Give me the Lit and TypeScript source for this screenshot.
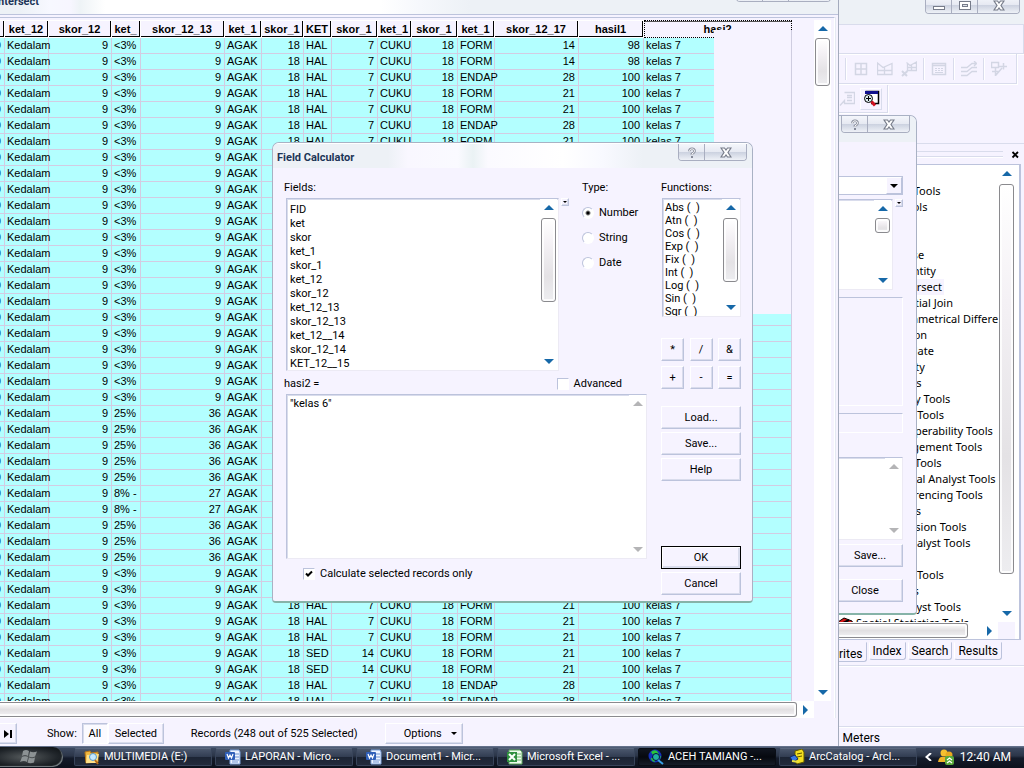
import { LitElement, html, css, svg, nothing } from "lit";
import { customElement, property, state } from "lit/decorators.js";
import { classMap } from "lit/directives/class-map.js";

/* Colours and controls shared by every window. */
const shared = css`
  :host, * { box-sizing: border-box; }
  :host {
    --face: #f6f3ff;
    --shade: #bcc3dc;
    --soft: #d9dcec;
    --title: #edf1f6;
    --ink: #000;
    font: 11px/14px Roboto, "Noto Sans", sans-serif;
    color: var(--ink);
  }
  ul { list-style: none; margin: 0; padding: 0; }
  button, select, textarea, input { font: inherit; color: inherit; margin: 0; border-radius: 0; }
  .btn {
    background: var(--face);
    border: 1px solid;
    border-color: #fff var(--shade) var(--shade) #fff;
    box-shadow: inset -1px -1px 0 var(--soft);
    height: 23px;
    padding: 0;
    text-align: center;
  }
  .btn.default { border: 1px solid #000; box-shadow: inset 1px 1px 0 #fff, inset -2px -2px 0 var(--soft); }
  .btn.tiny { width: 8px; height: 8px; display: grid; place-items: center; flex: none; }
  .sunken {
    background: #fff;
    border: 1px solid;
    border-color: var(--shade) #eceaf4 #eceaf4 var(--shade);
    box-shadow: inset 1px 1px 0 var(--soft);
  }
  .titlebar { display: flex; justify-content: space-between; align-items: flex-start; flex: none; }
  .title { font-weight: 700; color: #1d3557; }
`;

const tri = (dir: string, color = "#1668a8") => {
  const d: Record<string, string> = {
    up: "M0 5 5 0 10 5Z", down: "M0 0 10 0 5 5Z", right: "M0 0 5 5 0 10Z",
  };
  const wide = dir !== "right";
  return svg`<svg width=${wide ? 10 : 5} height=${wide ? 5 : 10} viewBox=${wide ? "0 0 10 5" : "0 0 5 10"}><path d=${d[dir]} fill=${color}/></svg>`;
};

const caret = (w = 6) => svg`<svg width=${w} height=${w / 2} viewBox="0 0 6 3"><path d="M0 0H6L3 3Z" fill="#000"/></svg>`;

/* Scroll bar: arrow, thumb, free track, arrow. */
@customElement("scroll-track")
class ScrollTrack extends LitElement {
  @property({ type: Number }) size = 0;
  @property({ type: Number }) offset = 0;
  @property({ type: Boolean, reflect: true }) horizontal = false;
  @property({ type: Boolean }) disabled = false;
  static styles = css`
    :host, * { box-sizing: border-box; }
    :host { display: flex; flex-direction: column; width: 17px; background: #fff; flex: none; }
    :host([horizontal]) { flex-direction: row; width: auto; height: 17px; }
    .end { display: grid; place-items: center; width: 17px; height: 17px; flex: none; }
    .thumb { background: linear-gradient(#fff, #f4f1f5 30%, #e4e2e5 70%, #ededf0);
      border: 1px solid #8a8a8e; border-radius: 3px; box-shadow: inset 0 0 0 2px #fffc; margin: 0 1px; flex: none; }
    :host([horizontal]) .thumb { margin: 1px 0; flex: 1; border-left: none; background: linear-gradient(#fff, #e2e0e2 50%, #f2f1f4); }
    .free { flex: 1; }
    :host([horizontal]) .free { flex: none; }
    svg { display: block; }
  `;
  render() {
    const c = this.disabled ? "#b4b4b6" : "#1668a8";
    if (this.horizontal)
      return html`<div class="thumb"></div><div class="free" style="width:${this.offset}px"></div><div class="end">${tri("right", c)}</div>`;
    return html`<div class="end">${tri("up", c)}</div>
      ${this.size ? html`<div style="height:${this.offset}px"></div><div class="thumb" style="height:${this.size}px"></div>` : nothing}
      <div class="free"></div><div class="end">${tri("down", c)}</div>`;
  }
}

/* Caption buttons joined in one glassy strip. */
@customElement("caption-buttons")
class CaptionButtons extends LitElement {
  @property() kinds = "help,close";
  static styles = css`
    :host { display: flex; height: 17px; border: 1px solid #a9aec0; border-top: none; border-radius: 0 0 4px 4px; overflow: hidden; flex: none; }
    button { border: none; border-right: 1px solid #a9aec0; padding: 0; width: 26px; display: grid; place-items: center;
      background: linear-gradient(#f4f6fb, #e6e9f2 50%, #ccd2e0 52%, #eef1f7); }
    button.close { width: 41px; border-right: none; }
    svg { display: block; }
  `;
  render() {
    const glyph: Record<string, unknown> = {
      help: svg`<path d="M3.5 4.2Q3.5 1.8 6 1.8T8.5 4.2Q8.5 5.6 6 6.8V8" fill="none" stroke="#858a99" stroke-width="2.6"/><path d="M3.5 4.2Q3.5 1.8 6 1.8T8.5 4.2Q8.5 5.6 6 6.8V8" fill="none" stroke="#fff" stroke-width="1"/><rect x="5" y="9" width="2" height="2" fill="#858a99"/>`,
      close: svg`<path d="M1 1H4.5L6 3 7.500 1H11L8 5.500 11 10H7.500L6 8 4.500 10H1L4 5.500Z" fill="#fff" stroke="#777c8a" stroke-width="1.200"/>`,
      min: svg`<rect x=".5" y="6.500" width="11" height="3" fill="#fff" stroke="#777c8a"/>`,
      max: svg`<rect x=".5" y="1.500" width="11" height="8" fill="#fff" stroke="#777c8a"/><rect x="3.500" y="4.500" width="5" height="2" fill="#dfe3ec" stroke="#777c8a"/>`,
    };
    const names: Record<string, string> = { help: "Help", close: "Close", min: "Minimize", max: "Restore" };
    return this.kinds.split(",").map(k => html`<button class=${k} aria-label=${names[k]}>
      <svg width="12" height="11" viewBox="0 0 12 11">${glyph[k]}</svg></button>`);
  }
}

interface Column { name: string; width: number; num?: boolean; }
const columns: Column[] = [
  { name: "", width: 105, num: true }, { name: "ket_12", width: 44 }, { name: "skor_12", width: 63, num: true },
  { name: "ket_", width: 29 }, { name: "skor_12_13", width: 84, num: true }, { name: "ket_1", width: 37 },
  { name: "skor_1", width: 42, num: true }, { name: "KET", width: 28 }, { name: "skor_1", width: 46, num: true },
  { name: "ket_1", width: 34 }, { name: "skor_1", width: 46, num: true }, { name: "ket_1", width: 37 },
  { name: "skor_12_17", width: 84, num: true }, { name: "hasil1", width: 65, num: true }, { name: "hasi2", width: 148 },
];

const endap = [2, 5, 40, 41];
const rows = Array.from({ length: 42 }, (_, i) => {
  const mid = i === 28 || i === 29;
  const steep = i >= 23 && i <= 32 && !mid;
  const sed = i === 38 || i === 39;
  const last = endap.includes(i) ? ["ENDAP", "28"] : ["FORM", i < 2 ? "14" : "21"];
  return ["20", "Kedalam", "9", mid ? "8% -" : steep ? "25%" : "<3%", mid ? "27" : steep ? "36" : "9",
    "AGAK", "18", sed ? "SED" : "HAL", sed ? "14" : "7", "CUKU", "18", ...last, i < 2 ? "98" : "100", "kelas 7"];
});

@customElement("attribute-window")
class AttributeWindow extends LitElement {
  static styles = [shared, css`
    :host { display: flex; flex-direction: column; background: var(--face); border-right: 1px solid #a4abbd; }
    .titlebar { height: 30px; padding: 0 7px 0 12px; border-bottom: 1px solid var(--shade);
      background: linear-gradient(90deg, var(--title) 120px, #f7f8ff 150px, #f7f6ff 170px, #eef3f6 180px, #fff 205px, #fff 480px, #f6f8fc 520px, var(--title) 570px); }
    .title { padding-top: 10px; width: 127px; text-align: right; }
    .frame { flex: 1; min-height: 0; display: flex; flex-direction: column; margin: 2px 3px 0 0; border-top: 1px solid var(--shade); border-right: 1px solid #fff; padding: 2px 3px 0 0; box-shadow: 1px 0 0 #e4e9f2; }
    .view { flex: 1; min-height: 0; display: flex; }
    .grid { flex: 1; min-width: 0; overflow: hidden; position: relative; }
    table { table-layout: fixed; width: 892px; border-collapse: separate; border-spacing: 0; font: 11px/15px "Liberation Sans", Arial, sans-serif; }
    th, td { white-space: nowrap; height: 16px; text-align: left; }
    td { background: #b3ffff; border: solid #d3cce2; border-width: 0 1px 1px 0; padding: 0 0 0 2px; }
    td.num { text-align: right; padding-right: 3px; }
    th { height: 18px; overflow: hidden; text-align: center; background: var(--face); border: solid #fff; border-width: 1px 1px 1px 0; box-shadow: inset -1px -1px 0 #000; padding: 0 1px 0 0; font-weight: 700; }
    th.picked { border: 1px dotted #000; box-shadow: inset 0 1px 0 #555; }
    .stale { position: absolute; top: 10px; left: 814px; width: 78px; height: 284px; background: var(--face); border-right: 1px solid #cfcde0; }
    .foot { display: flex; align-items: center; height: 17px; }
    .foot scroll-track { flex: 1; }
    .corner { width: 17px; }
    .bar { display: flex; align-items: center; height: 28px; padding: 3px 0 0 99px; flex: none; white-space: nowrap; }
    .bar .btn { height: 21px; }
    .first { width: 18px; display: grid; place-items: center; }
    .show { margin: 0 5px 0 30px; }
    .all { width: 26px; background: #fbfaff; border-color: var(--shade) #fff #fff var(--shade); box-shadow: inset 1px 1px 0 var(--soft); }
    .sel { width: 56px; }
    .records { margin-left: 27px; width: 194px; }
    .options { width: 78px; display: flex; align-items: center; justify-content: flex-end; gap: 9px; padding-right: 5px; }
  `];
  @state() private showAll = true;
  render() {
    return html`
      <div class="titlebar"><span class="title">Attributes of Intersect</span><caption-buttons kinds="min,max,close"></caption-buttons></div>
      <div class="frame">
        <div class="view">
          <div class="grid">
            <table>
              <colgroup>${columns.map(c => html`<col style="width:${c.width}px">`)}</colgroup>
              <thead><tr>${columns.map(c => html`<th class=${classMap({ picked: c.name === "hasi2" })}>${c.name}</th>`)}</tr></thead>
              <tbody>${rows.map(r => html`<tr>${r.map((v, i) => html`<td class=${classMap({ num: !!columns[i].num })}>${v}</td>`)}</tr>`)}</tbody>
            </table>
            <div class="stale"></div>
          </div>
          <scroll-track .size=${48} .offset=${1}></scroll-track>
        </div>
        <div class="foot"><scroll-track horizontal></scroll-track><div class="corner"></div></div>
      </div>
      <div class="bar">
        <button class="btn first" aria-label="Last record"><svg width="9" height="8" viewBox="0 0 9 8"><path d="M0 0 5 4 0 8ZM6 0H8V8H6Z"/></svg></button>
        <span class="show">Show:</span>
        <button class="btn all" @click=${() => (this.showAll = true)} aria-pressed=${this.showAll}>All</button>
        <button class="btn sel" @click=${() => (this.showAll = false)}>Selected</button>
        <span class="records">Records (248 out of 525 Selected)</span>
        <button class="btn options">Options ${caret()}</button>
      </div>`;
  }
}

@customElement("field-calculator")
class FieldCalculator extends LitElement {
  static styles = [shared, css`
    :host { display: flex; flex-direction: column; background: var(--face); border: 1px solid #a9b1c4; border-bottom: 2px solid #86b3a8; border-radius: 7px 7px 4px 4px; overflow: hidden; }
    .titlebar { height: 25px; padding: 0 5px 0 4px;
      background: linear-gradient(90deg, var(--title) 115px, #f9f7ff 135px, #fafaff 185px, #eaf2f4 200px, #fbfaff 215px, #fff 290px, #f8f9ff 330px, var(--title) 370px); border-top: 1px solid #fff; }
    .title { padding-top: 7px; }
    .body { display: grid; grid-template-columns: 1fr 80px; column-gap: 14px; padding: 13px 11px 6px 11px; flex: 1; }
    .left, .right { display: flex; flex-direction: column; min-width: 0; }
    .top { display: grid; grid-template-columns: 287px 1fr; column-gap: 11px; }
    .label { display: block; margin-bottom: 3px; }
    .pair { display: flex; gap: 2px; }
    .list { display: flex; padding-right: 1px; overflow: hidden; margin-left: 2px; }
    .fields { width: 273px; height: 173px; }
    .fields ul { flex: 1; padding: 4px 3px; line-height: 14px; }
    .functions { height: 119px; margin-left: 1px; }
    .functions ul { flex: 1; padding: 2px 2px; line-height: 13px; white-space: pre; }
    .types { display: flex; flex-direction: column; gap: 11px; }
    .types label { display: flex; align-items: center; gap: 5px; }
    .types .label { margin-bottom: 0; }
    input[type="radio"] { appearance: none; width: 12px; height: 12px; border-radius: 50%; background: #fff; border: 1px solid; border-color: var(--shade) #fff #fff var(--shade); }
    input[type="radio"]:checked { background: radial-gradient(circle, #000 1px, #fff 3px); }
    input[type="checkbox"] { appearance: none; width: 12px; height: 12px; background: #fff; border: 1px solid; border-color: var(--shade) #fff #fff var(--shade); }
    .check { display: flex; align-items: center; gap: 5px; }
    .tick { display: grid; }
    .tick > * { grid-area: 1 / 1; place-self: center; pointer-events: none; }
    .line { display: flex; justify-content: space-between; padding-right: 25px; margin: 6px 0 3px; height: 14px; }
    .expr { display: flex; height: 165px; margin-left: 2px; }
    textarea { flex: 1; min-width: 0; border: none; outline: none; resize: none; background: none; padding: 2px 3px; overflow: hidden; }
    .only { margin: 8px 0 0 19px; }
    .ops { display: grid; grid-template-columns: repeat(3, 23px); justify-content: space-between; row-gap: 5px; margin: 21px 0 17px; }
    .stack { display: flex; flex-direction: column; gap: 3px; }
    .end { margin-top: auto; }
  `];
  @state() private kind = "Number";
  render() {
    const fields = ["FID", "ket", "skor", "ket_1", "skor_1", "ket_12", "skor_12", "ket_12_13", "skor_12_13", "ket_12__14", "skor_12_14", "KET_12__15"];
    const fns = ["Abs", "Atn", "Cos", "Exp", "Fix", "Int", "Log", "Sin", "Sqr"];
    return html`
      <div class="titlebar"><span class="title">Field Calculator</span><caption-buttons></caption-buttons></div>
      <div class="body">
        <div class="left">
          <div class="top">
            <div>
              <span class="label" id="f">Fields:</span>
              <div class="pair">
                <div class="sunken list fields"><ul role="listbox" aria-labelledby="f">${fields.map(f => html`<li role="option">${f}</li>`)}</ul><scroll-track .size=${84} .offset=${2}></scroll-track></div>
                <button class="btn tiny" aria-label="Field options">${caret(4)}</button>
              </div>
            </div>
            <div class="types" role="radiogroup" aria-labelledby="t">
              <span class="label" id="t">Type:</span>
              ${["Number", "String", "Date"].map(k => html`<label><input type="radio" name="kind" .checked=${this.kind === k} @change=${() => (this.kind = k)}>${k}</label>`)}
            </div>
          </div>
          <div class="line"><label for="expr">hasi2 =</label><label class="check"><input type="checkbox">Advanced</label></div>
          <div class="sunken expr"><textarea id="expr" spellcheck="false" .value=${'"kelas 6"'}></textarea><scroll-track disabled></scroll-track></div>
          <label class="check only"><span class="tick"><input type="checkbox" checked><svg width="8" height="8" viewBox="0 0 8 8"><path d="M1 3.500 3 5.500 7 1.500" fill="none" stroke="#000" stroke-width="2"/></svg></span>Calculate selected records only</label>
        </div>
        <div class="right">
          <span class="label" id="fn">Functions:</span>
          <div class="sunken list functions"><ul role="listbox" aria-labelledby="fn">${fns.map(f => html`<li role="option">${f + " (  )"}</li>`)}</ul><scroll-track .size=${64} .offset=${2}></scroll-track></div>
          <div class="ops">${["*", "/", "&", "+", "-", "="].map(o => html`<button class="btn">${o}</button>`)}</div>
          <div class="stack"><button class="btn">Load...</button><button class="btn">Save...</button><button class="btn">Help</button></div>
          <div class="stack end"><button class="btn default">OK</button><button class="btn">Cancel</button></div>
        </div>
      </div>`;
  }
}

@customElement("intersect-dialog")
class IntersectDialog extends LitElement {
  static styles = [shared, css`
    :host { display: flex; flex-direction: column; background: var(--face); border: 1px solid #a9b1c4; border-bottom: 2px solid #86b3a8; border-radius: 7px 7px 4px 4px; overflow: hidden; }
    .titlebar { height: 26px; justify-content: flex-end; padding-right: 6px; background: var(--title); }
    .body { flex: 1; display: flex; flex-direction: column; padding: 34px 13px 10px; }
    .combo { position: relative; display: flex; height: 19px; flex: none; }
    select { appearance: none; width: 100%; border: 1px solid; border-color: var(--shade); background: #fff; }
    .drop { position: absolute; right: 1px; top: 1px; width: 16px; height: 17px; background: var(--face); border: 1px solid; border-color: #fff var(--shade) var(--shade) #fff; display: grid; place-items: center; pointer-events: none; }
    .pair { display: flex; gap: 2px; margin-top: 4px; }
    .list { flex: 1; height: 91px; display: flex; justify-content: flex-end; padding-right: 1px; }
    .group { border: 1px solid; border-color: var(--shade) #fff #fff var(--shade); height: 109px; margin-top: 7px; }
    .group.small { height: 20px; }
    .text { display: flex; height: 83px; margin-top: 24px; }
    textarea { flex: 1; border: none; resize: none; background: none; }
    .save, .close { align-self: flex-end; width: 76px; }
    .save { width: 66px; margin: 4px 0 12px; }
  `];
  render() {
    return html`
      <div class="titlebar"><caption-buttons></caption-buttons></div>
      <div class="body">
        <div class="combo"><select aria-label="Layer"><option></option></select><span class="drop">${caret(8)}</span></div>
        <div class="pair"><div class="sunken list"><scroll-track .size=${15} .offset=${1}></scroll-track></div><button class="btn tiny" aria-label="List options">${caret(4)}</button></div>
        <div class="group"></div>
        <div class="group small"></div>
        <div class="sunken text"><textarea aria-label="Expression"></textarea><scroll-track disabled></scroll-track></div>
        <button class="btn save">Save...</button>
        <button class="btn close">Close</button>
      </div>`;
  }
}

const tree: [string, number][] = [
  ["3D Analyst Tools", 0], ["Analysis Tools", 0], ["Extract", 1], ["Overlay", 1], ["Erase", 2], ["Identity", 2],
  ["Intersect", 2], ["Spatial Join", 2], ["Symmetrical Difference", 2], ["Union", 2], ["Update", 2], ["Proximity", 1],
  ["Statistics", 1], ["Cartography Tools", 0], ["Conversion Tools", 0], ["Data Interoperability Tools", 0],
  ["Data Management Tools", 0], ["Geocoding Tools", 0], ["Geostatistical Analyst Tools", 0], ["Linear Referencing Tools", 0],
  ["Mobile Tools", 0], ["Multidimension Tools", 0], ["Network Analyst Tools", 0], ["Samples", 0], ["Schematics Tools", 0],
  ["Server Tools", 0], ["Spatial Analyst Tools", 0], ["Spatial Statistics Tools", 0],
];

@customElement("map-window")
class MapWindow extends LitElement {
  static styles = [shared, css`
    :host { display: flex; flex-direction: column; background: var(--face); align-items: stretch; }
    .titlebar { height: 28px; background: var(--title); border-bottom: 1px solid var(--soft); justify-content: flex-end; padding-right: 4px; }
    .menu { height: 29px; border: solid var(--soft); border-width: 0 1px 1px 0; box-shadow: 0 1px 0 #fff; flex: none; margin-right: 0; }
    .tools { display: flex; justify-content: flex-end; align-items: center; height: 30px; flex: none; margin-right: 7px; padding-right: 8px; border: solid var(--soft); border-width: 0 1px 1px 0; box-shadow: 1px 1px 0 #fff; gap: 6px; }
    .tools.second { margin: 1px 136px 0 0; height: 28px; padding-right: 5px; gap: 2px; }
    .tools button { border: none; background: none; padding: 0; width: 18px; height: 18px; flex: none; display: grid; place-items: center; }
    .tools.second button { width: 22px; height: 22px; display: grid; place-items: center; }
    .tools .hot { border: 1px solid; border-color: #fff var(--soft) var(--soft) #fff; }
    .sep { width: 2px; height: 22px; border-left: 1px solid var(--soft); border-right: 1px solid #fff; margin: 0 -1px; flex: none; }
    .tools svg { display: block; }
    .dock { align-self: flex-end; width: 204px; margin-top: 30px; border-top: 1px solid var(--soft); display: flex; flex-direction: column; flex: 1; min-height: 0; }
    .grip { display: flex; align-items: center; gap: 8px; height: 20px; padding: 0 4px 0 0; flex: none; }
    .lines { flex: 1; height: 6px; border: solid var(--soft); border-width: 1px 0; box-shadow: 0 1px 0 #fff; }
    .x { border: none; background: none; padding: 0; width: 9px; height: 9px; }
    .x svg { display: block; }
    .box { height: 476px; margin: 0 3px 0 0; border: 1px solid var(--shade); border-width: 1px 2px 1px 1px; padding-right: 4px; display: flex; flex-direction: column; background: #fff; flex: none; }
    .view { display: flex; flex: 1; min-height: 0; }
    .view ul { flex: 1; overflow: hidden; padding: 18px 0 0 34px; font: 11px/16px "Noto Sans", sans-serif; white-space: nowrap; min-width: 0; }
    li { display: flex; align-items: center; }
    li.l1 { padding-left: 20px; }
    li.l2 { padding-left: 40px; }
    li span { padding: 0 2px 0 1px; flex: none; }
    li.on span { background: var(--face); }
    li svg { margin-left: -18px; flex: none; }
    .foot { display: flex; height: 17px; flex: none; }
    .foot scroll-track { flex: 1; }
    .corner { width: 17px; background: var(--face); }
    .tabs { display: flex; gap: 2px; justify-content: flex-end; padding: 2px 22px 0 0; height: 26px; border-bottom: 1px solid var(--soft); box-shadow: 0 1px 0 #fff; font: 12px/16px Roboto, sans-serif; flex: none; }
    .tab { height: 18px; border: 1px solid; border-color: transparent var(--shade) var(--shade) #fff; border-radius: 0 0 3px 3px; background: var(--face); padding: 0 3px; flex: none; }
    .tab.on { height: 20px; padding-top: 3px; }
    .status { flex: none; height: 20px; margin-top: auto; border-top: 1px solid var(--soft); box-shadow: inset 0 1px 0 #fff; display: flex; align-items: center; justify-content: flex-end; padding: 3px 144px 0 0; font-size: 12px; }
  `];
  render() {
    const g = "#d3d6e4";
    const ic = (p: unknown, name: string) => html`<button aria-label=${name} disabled><svg width="16" height="16" viewBox="0 0 16 16" fill="none" stroke=${g} stroke-width="1">${p}</svg></button>`;
    return html`
      <div class="titlebar"><caption-buttons kinds="min,max,close"></caption-buttons></div>
      <div class="menu"></div>
      <div class="tools">
        <span class="sep"></span>
        ${ic(svg`<path d="M2.500 2.500H13.500V13.500H2.500ZM8 2.500V13.500M2.500 8H13.500" stroke-width="1.500"/>`, "Grid")}
        ${ic(svg`<path d="M.5 2 6 6.500 15 2.500V13.500H.5ZM.5 9.500H15M7.500 6V13.500" stroke-width="1.300"/>`, "Adjust")}
        ${ic(svg`<path d="M5.500 1.500 9 4.500 15.500 1V9.500H6.500V3M10.500 4V9M7 6.500H15" stroke-width="1.300"/><path d="M1 10 6 15M6.500 10 1 15" stroke-width="2"/>`, "Remove")}
        <span class="sep"></span>
        ${ic(svg`<path d="M1.500 2.500H14.500V13.500H1.500ZM1.500 4.500H14.500" stroke-width="1.500"/><path d="M4 7.500H6M7 7.500H9M10 7.500H12M4 9.500H6M7 9.500H9M10 9.500H12M4 11.500H12"/>`, "Table")}
        <span class="sep"></span>
        ${ic(svg`<path d="M0 6.500H6L11 2.500H16M0 10.500H6L11 6.500H16M0 14.500H6L11 10.500H16M13 0 15.500 2.500 13 5" stroke-width="1.300"/>`, "Links")}
        <span class="sep"></span>
        ${ic(svg`<path d="M.5 1.500H7.500V6.500H.5ZM8 5.500H16M12.500 2V8.500M4.500 7V15M1 10.500H8M5 14 11 7" stroke-width="1.500"/>`, "Edit link")}
      </div>
      <div class="tools second">
        ${ic(svg`<path d="M5.500 1.500H15.500V12.500H5.500V9.500L1 14.500M8 4.500H13M8 6.500H13M8 9.500H13" stroke-width="1.300"/>`, "Note")}
        <button class="hot" aria-label="Viewer"><svg width="17" height="17" viewBox="0 0 17 17"><path d="M2.500 1.500H15.500V13.500H8" fill="#fff" stroke="#000" stroke-width="1.500"/><path d="M2 1H15V4H2Z" fill="#10108c"/><circle cx="5.500" cy="8.500" r="4" fill="#dcecec" stroke="#000"/><path d="M5.500 6V11M3 8.500H8" stroke="#000"/><path d="M8.500 11.500 12 15.500" stroke="#d01020" stroke-width="3"/></svg></button>
      </div>
      <div class="dock">
        <div class="grip"><div class="lines"></div><button class="x" aria-label="Close panel"><svg width="9" height="9" viewBox="0 0 9 9"><path d="M1.500 2 7 7.500M7 2 1.500 7.500" stroke="#000" stroke-width="1.800"/></svg></button></div>
        <div class="box">
          <div class="view">
            <ul>${tree.map(([t, l], i) => html`<li class=${classMap({ l1: l === 1, l2: l === 2, on: t === "Intersect" })}>
              ${i === tree.length - 1 ? html`<svg width="18" height="14" viewBox="0 0 18 14"><path d="M1 6 7 2 15 5 17 12H3Z" fill="#d81818" stroke="#000"/><path d="M6 7 12 4" stroke="#000" stroke-width="2"/></svg>` : nothing}<span>${t}</span></li>`)}</ul>
            <scroll-track .size=${390} .offset=${2}></scroll-track>
          </div>
          <div class="foot"><scroll-track horizontal .offset=${13}></scroll-track><div class="corner"></div></div>
        </div>
        <div class="tabs"><button class="tab on">Favorites</button><button class="tab">Index</button><button class="tab">Search</button><button class="tab">Results</button></div>
      </div>
      <div class="status">Meters</div>`;
  }
}

const word = svg`<path d="M5 1H14L15 3V15H5Z" fill="#eef4ff" stroke="#7fa3dc"/><path d="M8 5H14M8 8H14M7 11H14M7 13H13" stroke="#6f93d0"/><rect x="0" y="3" width="10" height="8" rx="1" fill="#2f5fb8"/><path d="M2 5 3.500 9 5 6 6.500 9 8 5" fill="none" stroke="#fff" stroke-width="1.200"/>`;
const tasks: { label: string; icon: unknown; active?: boolean }[] = [
  { label: "MULTIMEDIA (E:)", icon: svg`<path d="M1 3 6 2 7 4 14 3V13L2 14Z" fill="#f0b840" stroke="#b87818"/><path d="M3 6 15 5 13 14 2 14Z" fill="#ffe28a"/><circle cx="9" cy="8" r="3.500" fill="#c4e8ff" stroke="#5a98c8"/><path d="M11 11 14 15" stroke="#b86c18" stroke-width="2"/>` },
  { label: "LAPORAN - Micro...", icon: word },
  { label: "Document1 - Micr...", icon: word },
  { label: "Microsoft Excel - ...", icon: svg`<path d="M2 1H13L15 3V15H2Z" fill="#eefaee" stroke="#5faa5f"/><path d="M10 5H14M10 8H14M10 11H14" stroke="#6ab86a"/><rect x="0" y="3" width="10" height="10" fill="#2f8f3f"/><path d="M2 5 8 11M8 5 2 11" stroke="#fff" stroke-width="2"/>` },
  { label: "ACEH TAMIANG -...", active: true, icon: svg`<circle cx="7" cy="7" r="6.500" fill="#1430b8"/><path d="M3 3Q6 0 9 2L11 5 8 8 5 6ZM3 9 6 9 7 13Q3 12 3 9ZM10 8 13 7 12 10Z" fill="#28c838"/><circle cx="8" cy="8" r="3.500" fill="#20b0a0" stroke="#081040"/><path d="M10 11 15 15" stroke="#38a0e8" stroke-width="2"/>` },
  { label: "ArcCatalog - ArcI...", icon: svg`<path d="M6 2 13 0 15 3V13L8 15 6 12Z" fill="#f4e020" stroke="#605800"/><path d="M8 5 13 4M8 8 13 7" stroke="#605800"/><path d="M1 8 6 6 9 10 4 13Z" fill="#3878e0" stroke="#102868"/><path d="M3 12 10 13" stroke="#e8e040" stroke-width="2"/>` },
];

@customElement("task-bar")
class TaskBar extends LitElement {
  static styles = [shared, css`
    :host { display: flex; align-items: center; height: 22px; color: #fff; padding-right: 13px; background: linear-gradient(#63708a 0 1px, #3c4960 2px, #2b3548 45%, #141b2a 55%, #0c111c); font-size: 12px; }
    .start { width: 63px; height: 20px; border: none; padding: 0 0 0 20px; border-radius: 0 10px 10px 0; margin-right: 11px; flex: none; text-align: left;
      background: radial-gradient(ellipse at 40% 50%, #555a5c, #20252a 60%, #0a0d10); box-shadow: inset -1px -1px 1px #7a8488; }
    .start svg { display: block; }
    .task { display: flex; align-items: center; gap: 4px; flex: 0 1 138px; min-width: 0; height: 18px; margin-right: 3px; padding: 0 0 0 9px; border: 1px solid #38445a; border-top-color: #5a677e; border-radius: 2px;
      background: linear-gradient(#4a566c, #323d52 48%, #1c2434 52%, #222b3c); white-space: nowrap; overflow: hidden; font-size: 11px; }
    .task.active { background: linear-gradient(#10151f, #06090f 50%, #161d28); border-color: #0a0e16; }
    .task svg { flex: none; }
    .tray { margin-left: auto; display: flex; align-items: center; gap: 6px; white-space: nowrap; }
    .tray button { border: none; background: none; padding: 0; display: flex; }
  `];
  render() {
    return html`
      <button class="start" aria-label="Start"><svg width="18" height="16" viewBox="0 0 18 16" fill="#8c9294"><path d="M3 2Q6 0 9 2L8 7Q5 5 2 7ZM10 2.500Q13 4 17 2.500L15 7.500Q12 9 9 7.500ZM2 8Q5 6.500 8 8L7 13Q4 11 0 13ZM9 8.500Q12 10 15 8.500L14 13.500Q10 15 7.500 13.500Z"/></svg></button>
      ${tasks.map(t => html`<button class=${classMap({ task: true, active: !!t.active })}><svg width="16" height="16" viewBox="0 0 16 16">${t.icon}</svg>${t.label}</button>`)}
      <div class="tray">
        <button aria-label="Show hidden icons"><svg width="7" height="8" viewBox="0 0 7 8"><path d="M6 0 1.500 4 6 8" fill="none" stroke="#fff" stroke-width="2"/></svg></button>
        <svg width="16" height="16" viewBox="0 0 16 16"><circle cx="6" cy="4" r="3.500" fill="#f6c030"/><circle cx="11" cy="6" r="3.500" fill="#e8a820"/><path d="M0 13Q1 7 6 8 12 7 12 13Z" fill="#f0b428"/><rect x="7" y="7" width="9" height="9" rx="2" fill="#58a838"/><path d="M9 11 11.500 9 14 11M9 14 11.500 12 14 14" fill="none" stroke="#fff" stroke-width="1.300"/></svg>
        <time>12:40 AM</time>
      </div>`;
  }
}

@customElement("app-root")
class AppRoot extends LitElement {
  static styles = css`
    :host { display: flex; flex-direction: column; height: 100vh; overflow: hidden; background: #f6f3ff; }
    .desktop { flex: 1; min-height: 0; position: relative; overflow: hidden; }
    .desktop > * { position: absolute; }
    map-window { inset: -3px 0 0 0; }
    intersect-dialog { left: 560px; top: 115px; width: 357px; height: 500px; }
    attribute-window { left: -100px; top: -15px; bottom: 0; width: 939px; }
    field-calculator { left: 272px; top: 142px; width: 481px; height: 461px; }
    task-bar { flex: none; }
  `;
  render() {
    return html`
      <div class="desktop">
        <map-window></map-window>
        <intersect-dialog></intersect-dialog>
        <attribute-window></attribute-window>
        <field-calculator></field-calculator>
      </div>
      <task-bar></task-bar>`;
  }
}
